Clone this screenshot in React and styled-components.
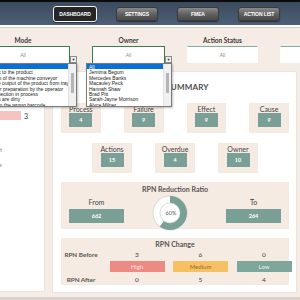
import React from 'react';
import styled, { createGlobalStyle } from 'styled-components';

const GlobalStyle = createGlobalStyle`
  html, body { margin: 0; padding: 0; overflow: hidden; }
  body {
    width: 300px;
    height: 300px;
    background: #f4ece5;
    font-family: Lato, "Liberation Sans", sans-serif;
  }
`;

const Page = styled.div`
  width: 300px;
  height: 300px;
  overflow: hidden;
  display: flex;
  flex-direction: column;
`;

const TopBar = styled.nav`
  height: 23px;
  flex-shrink: 0;
  border-top: 2px solid #0b0b0b;
  border-bottom: 2px solid #fff;
  box-shadow: 0 1px 0 #d8d1ca;
  background: linear-gradient(#3b4a5d, #4e6076);
  display: flex;
  align-items: center;
  gap: 19px;
  padding-left: 53px;
`;

const NavButton = styled.button`
  box-sizing: border-box;
  width: ${p => (p.$active ? 44 : 42)}px;
  height: ${p => (p.$active ? 16 : 14)}px;
  padding: 0;
  border-radius: 3px;
  border: ${p => (p.$active ? '1.5px solid #f4f4f4' : '1px solid #3c3c3c')};
  background: ${p =>
    p.$active ? '#262626' : 'linear-gradient(#8a8a8a, #5e5e5e 55%, #4a4a4a)'};
  box-shadow: 0 1px 1px rgba(0, 0, 0, 0.45);
  color: #fff;
  font: bold 5px "Liberation Sans", Arial, sans-serif;
  letter-spacing: -0.1px;
  white-space: nowrap;
`;

const Filters = styled.section`
  display: flex;
  gap: 22px;
  margin-left: -24px;
  padding-top: 9px;
  flex-shrink: 0;
`;

const FilterGroup = styled.div`
  position: relative;
  width: ${p => p.$w}px;
  flex-shrink: 0;
  display: flex;
  flex-direction: column;
  align-items: center;
`;

const FilterLabel = styled.div`
  font-size: 6.5px;
  font-weight: 700;
  line-height: 9px;
  color: #3a3a3a;
  margin-bottom: 1px;
`;

const SelectBox = styled.div`
  position: relative;
  box-sizing: border-box;
  width: 100%;
  height: 17px;
  background: #fff;
  border-top: 1px solid ${p => (p.$open ? '#3f7b50' : '#86ada0')};
  border-left: 1px solid ${p => (p.$open ? '#3f7b50' : 'transparent')};
  border-right: 1px solid ${p => (p.$open ? '#3f7b50' : 'transparent')};
  display: flex;
  align-items: center;
  justify-content: center;
  font-size: 5px;
  color: #8a8a8a;
`;

const DropArrow = styled.div`
  position: absolute;
  right: -8px;
  bottom: 0;
  box-sizing: border-box;
  width: 7px;
  height: 7px;
  border: 1px solid #8c8c8c;
  background: #f1f1f1;
  display: flex;
  align-items: center;
  justify-content: center;
  font-size: 4px;
  color: #333;
`;

const DropList = styled.div`
  position: absolute;
  top: 100%;
  right: -8px;
  z-index: 5;
  box-sizing: border-box;
  width: ${p => p.$w}px;
  height: 44px;
  background: #fff;
  border: 1px solid #7b7b7b;
  display: flex;
  box-shadow: 1px 1px 2px rgba(0, 0, 0, 0.25);
`;

const DropItems = styled.div`
  flex: 1;
  overflow: hidden;
`;

const DropItem = styled.div`
  height: 5.4px;
  line-height: 5.4px;
  padding-left: 2px;
  font: 5px "Liberation Sans", Arial, sans-serif;
  white-space: nowrap;
  color: ${p => (p.$selected ? '#fff' : '#1a1a1a')};
  background: ${p => (p.$selected ? '#0a6fd6' : 'transparent')};
`;

const ScrollTrack = styled.div`
  width: 7px;
  background: #f0f0f0;
  border-left: 1px solid #e2e2e2;
  display: flex;
  justify-content: center;
  padding-top: 9px;
`;

const ScrollThumb = styled.div`
  width: 3px;
  height: 20px;
  background: #b5b5b5;
`;

const Body = styled.main`
  display: flex;
  gap: 7px;
  margin-top: 8px;
  height: 222px;
  flex-shrink: 0;
`;

const SideCard = styled.aside`
  margin-left: -40px;
  width: 85px;
  flex-shrink: 0;
  box-sizing: border-box;
  height: 221px;
  background: #fff;
  border: 1px solid #ece4dd;
  padding-top: 39px;
`;

const BarRow = styled.div`
  display: flex;
  align-items: center;
  gap: 3px;
`;

const SideBar = styled.div`
  width: ${p => p.$w}px;
  height: 9px;
  background: #f5c4c0;
`;

const SideValue = styled.span`
  font-size: 7px;
  color: #333;
`;

const AxisLabels = styled.div`
  margin-top: 26px;
  width: 41px;
  display: flex;
  flex-direction: column;
  gap: 7px;
  text-align: right;
  font-size: 6px;
  line-height: 8px;
  color: #999;
`;

const MainCard = styled.section`
  width: 245px;
  flex-shrink: 0;
  box-sizing: border-box;
  padding: 11px 7px 7px 8px;
  background: #fff;
  border: 1px solid #ece4dd;
  display: flex;
  flex-direction: column;
`;

const Title = styled.h2`
  margin: 0;
  text-align: center;
  font-size: 8px;
  line-height: 9px;
  font-weight: 700;
  letter-spacing: 0.2px;
  color: #4a4a4a;
`;

const TileRow = styled.div`
  display: flex;
  justify-content: center;
  gap: 23px;
  margin-top: ${p => p.$top}px;
`;

const Tile = styled.div`
  width: 40px;
  height: 30px;
  box-sizing: border-box;
  padding-top: 2px;
  background: #f5ebe2;
  display: flex;
  flex-direction: column;
  align-items: center;
`;

const TileLabel = styled.div`
  font-size: 7px;
  line-height: 8px;
  color: #444;
`;

const GreenBox = styled.div`
  width: ${p => p.$w || 23}px;
  height: 14px;
  background: #7a9f96;
  color: #fff;
  font-size: 5.5px;
  font-weight: 700;
  display: flex;
  align-items: center;
  justify-content: center;
`;

const Panel = styled.div`
  margin-top: 9px;
  height: ${p => p.$h}px;
  box-sizing: border-box;
  padding-top: ${p => p.$pt}px;
  background: #f5ebe2;
`;

const PanelTitle = styled.div`
  text-align: center;
  font-size: 7px;
  line-height: 8px;
  font-weight: 700;
  color: #555;
`;

const RatioRow = styled.div`
  display: flex;
  padding: 0 8px;
  margin-top: 2px;
`;

const RatioSide = styled.div`
  width: 55px;
  margin-top: 3px;
  display: flex;
  flex-direction: column;
  align-items: center;
  gap: 3px;
`;

const RatioLabel = styled.div`
  font-size: 7px;
  line-height: 8px;
  color: #444;
`;

const DonutSlot = styled.div`
  width: 104px;
  padding-left: 28px;
  box-sizing: border-box;
`;

const ChangeGrid = styled.div`
  display: grid;
  grid-template-columns: 40px repeat(3, 55px);
  grid-template-rows: 8px 11px 8px;
  column-gap: 8.5px;
  row-gap: 3px;
  margin-top: 2px;
  align-items: center;
  justify-items: center;
`;

const RowLabel = styled.div`
  font-size: 6.3px;
  font-weight: 700;
  color: #555;
  white-space: nowrap;
`;

const Num = styled.div`
  font-size: 6.5px;
  color: #444;
`;

const LevelBar = styled.div`
  width: 55px;
  height: 11px;
  background: ${p => p.$bg};
  color: ${p => p.$fg};
  font-size: 6px;
  display: flex;
  align-items: center;
  justify-content: center;
`;

const Footer = styled.div`
  margin-top: auto;
  height: 3px;
  background: #d8d3cf;
`;

const modeItems = [
  'All',
  'Risk to the product',
  'Stop of the machine conveyor',
  'Late output of the product from tray',
  'Poor preparation by the operator',
  'Inspection in process',
  'Pins are dirty',
  'Scan the wrong barcode',
];

const ownerItems = [
  'All',
  'Jemima Begum',
  'Mercedes Banks',
  'Macauley Peck',
  'Hannah Shaw',
  'Brad Pitt',
  'Sarah-Jayne Morrison',
  'Alyce Milner',
];

function Dropdown({ items, width }) {
  return (
    <DropList $w={width}>
      <DropItems>
        {items.map((it, i) => (
          <DropItem key={it} $selected={i === 0}>{it}</DropItem>
        ))}
      </DropItems>
      <ScrollTrack>
        <ScrollThumb />
      </ScrollTrack>
    </DropList>
  );
}

function Donut({ pct }) {
  const c = 2 * Math.PI * 13.5;
  return (
    <svg width="36" height="36" viewBox="0 0 36 36">
      <circle cx="18" cy="18" r="17" fill="#fff" stroke="#b9cbc4" strokeWidth="0.6" />
      <circle
        cx="18" cy="18" r="13.5" fill="none" stroke="#7a9f96" strokeWidth="7"
        strokeDasharray={`${(pct / 100) * c} ${c}`}
        transform="rotate(-90 18 18)"
      />
      <circle cx="18" cy="18" r="10" fill="#fff" stroke="#b9cbc4" strokeWidth="0.6" />
      <text x="19" y="20" textAnchor="middle" fontSize="5.5" fill="#555" fontFamily="Lato, sans-serif">
        {pct}%
      </text>
    </svg>
  );
}

const topTiles = [
  ['Process', 4],
  ['Failure', 9],
  ['Effect', 9],
  ['Cause', 9],
];
const midTiles = [
  ['Actions', 15],
  ['Overdue', 4],
  ['Owner', 10],
];

export default function App() {
  return (
    <Page>
      <GlobalStyle />
      <TopBar>
        <NavButton $active>DASHBOARD</NavButton>
        <NavButton>SETTINGS</NavButton>
        <NavButton>FMEA</NavButton>
        <NavButton>ACTION LIST</NavButton>
      </TopBar>

      <Filters>
        <FilterGroup $w={94}>
          <FilterLabel>Mode</FilterLabel>
          <SelectBox $open>
            All
            <DropArrow>▼</DropArrow>
            <Dropdown items={modeItems} width={89} />
          </SelectBox>
        </FilterGroup>
        <FilterGroup $w={73}>
          <FilterLabel>Owner</FilterLabel>
          <SelectBox $open>
            All
            <DropArrow>▼</DropArrow>
            <Dropdown items={ownerItems} width={86} />
          </SelectBox>
        </FilterGroup>
        <FilterGroup $w={71}>
          <FilterLabel>Action Status</FilterLabel>
          <SelectBox>All</SelectBox>
        </FilterGroup>
        <FilterGroup $w={71}>
          <FilterLabel>Due Date</FilterLabel>
          <SelectBox>All</SelectBox>
        </FilterGroup>
      </Filters>

      <Body>
        <SideCard>
          <BarRow>
            <SideBar $w={60} />
            <SideValue>3</SideValue>
          </BarRow>
          <AxisLabels>
            <span>Shift</span>
            <span>Line</span>
          </AxisLabels>
        </SideCard>

        <MainCard>
          <Title>FMEA SUMMARY</Title>
          <TileRow $top={11}>
            {topTiles.map(([label, v]) => (
              <Tile key={label}>
                <TileLabel>{label}</TileLabel>
                <GreenBox>{v}</GreenBox>
              </Tile>
            ))}
          </TileRow>
          <TileRow $top={10}>
            {midTiles.map(([label, v]) => (
              <Tile key={label}>
                <TileLabel>{label}</TileLabel>
                <GreenBox>{v}</GreenBox>
              </Tile>
            ))}
          </TileRow>

          <Panel $h={47} $pt={3}>
            <PanelTitle>RPN Reduction Ratio</PanelTitle>
            <RatioRow>
              <RatioSide>
                <RatioLabel>From</RatioLabel>
                <GreenBox $w={55}>662</GreenBox>
              </RatioSide>
              <DonutSlot>
                <Donut pct={60} />
              </DonutSlot>
              <RatioSide>
                <RatioLabel>To</RatioLabel>
                <GreenBox $w={55}>264</GreenBox>
              </RatioSide>
            </RatioRow>
          </Panel>

          <Panel $h={49} $pt={2}>
            <PanelTitle>RPN Change</PanelTitle>
            <ChangeGrid>
              <RowLabel>RPN Before</RowLabel>
              <Num>3</Num>
              <Num>6</Num>
              <Num>0</Num>
              <span />
              <LevelBar $bg="#ee8a84" $fg="#fde3df">High</LevelBar>
              <LevelBar $bg="#f5c164" $fg="#8f6f33">Medium</LevelBar>
              <LevelBar $bg="#7ea69b" $fg="#e8f1ee">Low</LevelBar>
              <RowLabel>RPN After</RowLabel>
              <Num>0</Num>
              <Num>5</Num>
              <Num>4</Num>
            </ChangeGrid>
          </Panel>
        </MainCard>
      </Body>
      <Footer />
    </Page>
  );
}
